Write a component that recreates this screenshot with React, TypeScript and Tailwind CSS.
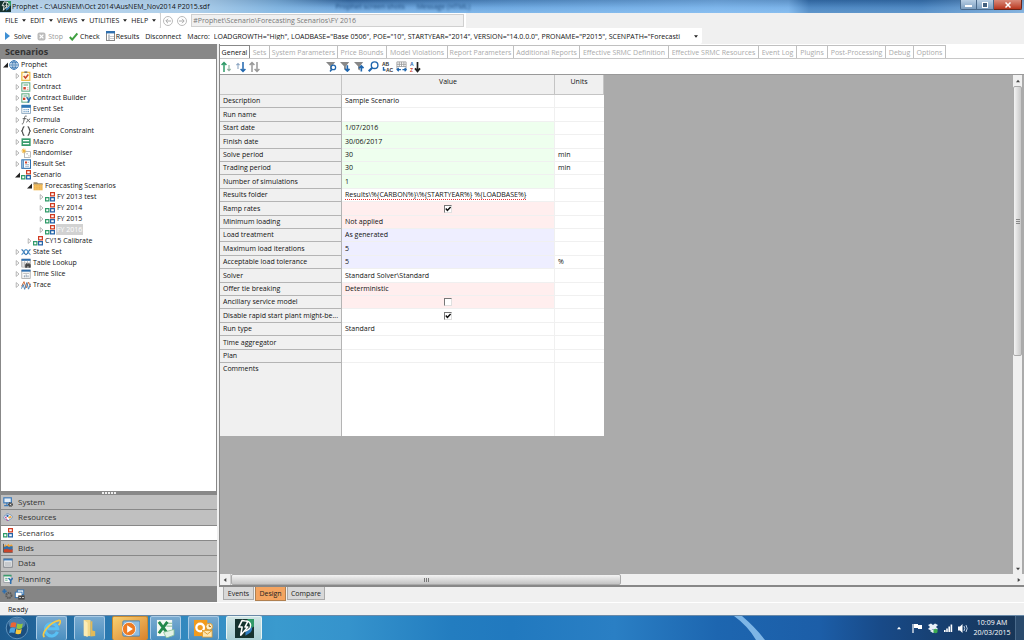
import React from "react";

type Glyph =
  | "globe" | "batch" | "contract" | "builder" | "calendar" | "formula" | "braces" | "macro"
  | "random" | "result" | "scenario" | "folder" | "state" | "lookup" | "slice" | "trace"
  | "system" | "resources" | "bids" | "data" | "planning";

const glyphs: Record<Glyph, React.ReactNode> = {
  globe: (
    <g fill="none" stroke="#2f6fae" strokeWidth="1">
      <circle cx="6" cy="6" r="5.2" fill="#fff" />
      <ellipse cx="6" cy="6" rx="2.4" ry="5.2" />
      <path d="M.8 6h10.4M1.8 3.2h8.4M1.8 8.8h8.4M6 .8v10.4" strokeWidth=".8" />
    </g>
  ),
  batch: (
    <g fill="none">
      <rect x="1" y="1.6" width="9.6" height="9.6" fill="#fff8e0" stroke="#eebb45" strokeWidth="1.5" />
      <path d="M4 1.4h3.6" stroke="#777" strokeWidth="2" />
      <path d="M3.2 6l2.2 2.4 3.4-4.2" stroke="#c8442a" strokeWidth="1.8" />
    </g>
  ),
  contract: (
    <g fill="none">
      <rect x="1" y="1" width="9.6" height="10" fill="#fff" stroke="#57a77e" strokeWidth="1.2" />
      <path d="M3 3.600h5.600" stroke="#57a77e" strokeWidth="1.200" />
      <rect x="2.800" y="6" width="3" height="3" fill="#d2452c" />
      <path d="M7 7h2M7 9h2" stroke="#d9a090" />
    </g>
  ),
  builder: (
    <g fill="none">
      <rect x="1" y="1" width="8.6" height="10" fill="#fff" stroke="#57a77e" strokeWidth="1.2" />
      <path d="M3 3.6h4.6" stroke="#57a77e" strokeWidth="1.200" />
      <rect x="2.4" y="5.6" width="2.8" height="2.8" fill="#d2452c" />
      <path d="M6.8 5l2.3 3.400M11.6 5L8.2 11.6" stroke="#2f6fae" strokeWidth="1.8" />
    </g>
  ),
  calendar: (
    <g>
      <rect x="1" y="1.600" width="10.400" height="9.600" fill="#fff" stroke="#7e9cb8" />
      <path d="M.6 1h11.200v3.600H.6z" fill="#2f78b7" />
      <path d="M3 6.600h1.400M5.400 6.600h1.400M7.800 6.600h1.800M3 9h1.400M5.400 9h1.400M7.800 9h1.800" stroke="#6c9cc6" strokeWidth="1.500" />
    </g>
  ),
  formula: (
    <g fill="none" stroke="#555" strokeWidth="1.1">
      <path d="M1 10.600c1.400.4 1.800-.8 2.200-2.600l1-4.800C4.600 1.400 5.200.8 6.800 1.400M2 4.400h4M6.600 4.600c1.600-.4 2.200 4 4.400 3.800M11 4.400L6.200 8.800" />
    </g>
  ),
  braces: (
    <g fill="none" stroke="#444" strokeWidth="1.4">
      <path d="M4 .8C1.400.8 3 5 .8 6 3 7 1.400 11.200 4 11.200M8 .8c2.600 0 1 4.200 3.200 5.200C9 7 10.600 11.200 8 11.200" />
    </g>
  ),
  macro: (
    <g>
      <rect x=".6" y="1.600" width="11" height="9.200" fill="#3a9c6c" />
      <path d="M2.400 4.400h7.400M2.400 8h7.400" stroke="#fff" strokeWidth="1.400" />
    </g>
  ),
  random: (
    <g>
      <rect x="4" y="4.400" width="7.400" height="6.800" fill="#fff" stroke="#999" strokeWidth=".8" />
      <path d="M6.600 7h1.400M9 9.400h1" stroke="#777" />
      <path d="M3.400.6v5.800M.6 3.500h5.600M1.400 1.500l4 4M5.400 1.500l-4 4" stroke="#f0b030" strokeWidth="1.1" />
    </g>
  ),
  result: (
    <g>
      <rect x="1" y="1" width="10.400" height="10.200" fill="#fff" stroke="#2f6fae" strokeWidth="1.300" />
      <path d="M2.800 1v10" stroke="#5a94c8" strokeWidth="1.600" />
      <rect x="4.800" y="3" width="2.400" height="2.400" fill="#d2452c" />
      <path d="M8 4h1.600M5 6.800h4.600M5 8.800h4.600" stroke="#7fa0c0" strokeWidth=".9" />
    </g>
  ),
  scenario: (
    <g transform="scale(1.2)" fillRule="evenodd">
      <path d="M5 0h5v4.500H5zM6.200 1.200v2.100h2.600V1.200z" fill="#cf3b22" />
      <path d="M0 5h4.500v4.500H0zM1.200 6.200v2.100h2.100V6.200z" fill="#2f9a68" />
      <path d="M5 5h5v4.500H5zM6.200 6.200v2.100h2.600V6.200z" fill="#2463a8" />
    </g>
  ),
  folder: (
    <g>
      <path d="M.6 1.400h4.400l1 1.400h5.600v2H.6z" fill="#9b8b6c" />
      <rect x=".6" y="4" width="11" height="7.200" fill="#f3c062" />
      <path d="M1.400 5.600h9.600M1.400 7.600h9.600M1.400 9.600h9.600" stroke="#e09a35" strokeWidth=".7" strokeDasharray="1 1" />
    </g>
  ),
  state: (
    <g fill="none" strokeWidth="1.500">
      <path d="M.6 3c3 0 2.400 6 5.400 6s2.400-6 5.400-6" stroke="#2f6fae" />
      <path d="M.6 9c3 0 2.400-6 5.400-6s2.400 6 5.400 6" stroke="#4b90c8" />
    </g>
  ),
  lookup: (
    <g>
      <rect x="1" y="1.400" width="10" height="9.400" fill="#fff" stroke="#888" strokeWidth=".8" />
      <path d="M.6 1h10.800v2.400H.6z" fill="#2f6fae" />
      <path d="M1 6h10M1 8.400h10M4.400 3v8M7.800 3v8" stroke="#999" strokeWidth=".7" />
      <path d="M5 7.600h1v-1.400h1.800v1.400h.8v-1.400h1.800v1.400h1.200v4H8.800v-2h-1v2H5z" fill="#444" />
    </g>
  ),
  slice: (
    <g>
      <rect x="1" y="1.400" width="10" height="9.800" fill="#fff" stroke="#999" strokeWidth=".9" />
      <path d="M.6 .8h10.800v2.400H.6z" fill="#2f6fae" />
      <path d="M2.600 5.200h7" stroke="#aaa" />
      <path d="M4 10V7.600M6.200 10V6.600M8.400 10V7.600" stroke="#7d8ea0" strokeWidth="1.100" />
    </g>
  ),
  trace: (
    <g fill="none" strokeWidth="1.200">
      <path d="M.6 7.600L3.600 2l2.600 7.600L9 2.400l2.600 6" stroke="#d2703c" />
      <path d="M.6 10.400l2-5 1.800 5.800L7 3l2 8 2.600-6.600" stroke="#5486b5" />
    </g>
  ),
  system: (
    <g>
      <rect x="1" y="1" width="9" height="6" fill="#e4eef8" stroke="#3d7ab8" strokeWidth="1.400" />
      <path d="M4.600 7v2.400M1.400 10.400h5.400" stroke="#3d7ab8" strokeWidth="1.600" />
      <circle cx="9" cy="9" r="2" fill="#ddd" stroke="#333" strokeWidth="1.600" strokeDasharray="1.200 .5" />
      <circle cx="9" cy="9" r="1.300" fill="#ddd" stroke="#333" strokeWidth=".9" />
    </g>
  ),
  resources: (
    <g fill="#fff">
      <path d="M3 8.600C.4 8.600.2 5 2.600 4.600 3 2 7 1.400 8 3.600c3-.6 4.200 3.400 1.400 4.600L6 10.600z" stroke="#5c86b8" strokeWidth="1" />
      <path d="M2.400 6l2 1.400M4 8.800l2 1.600" stroke="#c04f90" strokeWidth="1.400" />
      <path d="M6 6.200L9 4.400l1.600 2L7.400 8.200z" fill="#f0a840" />
      <circle cx="5.400" cy="4.600" r="1.400" fill="#2463a8" />
    </g>
  ),
  bids: (
    <g>
      <path d="M.6 1v10.200h11" fill="none" stroke="#444" />
      <path d="M1.200 3.800L3 1.600l1.600 1.600L6.400 1l1.800 2L10 1.400l1.600 1.800v3H1.200z" fill="#f0a030" />
      <path d="M1.200 4.400h2v-.8h2.600v1h2.800v-.8h3v5H1.200z" fill="#2f6fae" />
      <path d="M1.200 7.600l4-.8 3 1.200 3.400-.6v3.800H1.200z" fill="#c8442a" />
    </g>
  ),
  data: (
    <g>
      <rect x="1" y="1" width="10" height="10" fill="#fff" stroke="#6a7078" />
      <path d="M.6 .8h10.800v2.200H.6z" fill="#3d7ab8" />
      <path d="M3.600 4.200v5.800M6 4.200v5.800M8.400 4.200v5.800" stroke="#7a8088" strokeWidth="1" />
    </g>
  ),
  planning: (
    <g>
      <rect x="1" y="1.400" width="8.600" height="8.600" fill="#fff" stroke="#8a9098" strokeWidth=".9" />
      <path d="M.6 1h9.600v2H.6z" fill="#3a9c6c" />
      <path d="M2.600 5.200h3M2.600 7.400h3" stroke="#3a9c6c" />
      <path d="M6.600 4.800l2.600 3 2.600-3M9.200 7.200V12" fill="none" stroke="#2f6fae" strokeWidth="1.800" />
    </g>
  ),
};

function Icon({ name }: { name: Glyph }) {
  return (
    <svg viewBox="0 0 12 12" className="size-[10px] shrink-0" aria-hidden="true">
      {glyphs[name]}
    </svg>
  );
}

const tree: { label: string; icon: Glyph; level: 0 | 1 | 2 | 3; open?: boolean; selected?: boolean }[] = [
  { label: "Prophet", icon: "globe", level: 0, open: true },
  { label: "Batch", icon: "batch", level: 1 },
  { label: "Contract", icon: "contract", level: 1 },
  { label: "Contract Builder", icon: "builder", level: 1 },
  { label: "Event Set", icon: "calendar", level: 1 },
  { label: "Formula", icon: "formula", level: 1 },
  { label: "Generic Constraint", icon: "braces", level: 1 },
  { label: "Macro", icon: "macro", level: 1 },
  { label: "Randomiser", icon: "random", level: 1 },
  { label: "Result Set", icon: "result", level: 1 },
  { label: "Scenario", icon: "scenario", level: 1, open: true },
  { label: "Forecasting Scenarios", icon: "folder", level: 2, open: true },
  { label: "FY 2013 test", icon: "scenario", level: 3 },
  { label: "FY 2014", icon: "scenario", level: 3 },
  { label: "FY 2015", icon: "scenario", level: 3 },
  { label: "FY 2016", icon: "scenario", level: 3, selected: true },
  { label: "CY15 Calibrate", icon: "scenario", level: 2 },
  { label: "State Set", icon: "state", level: 1 },
  { label: "Table Lookup", icon: "lookup", level: 1 },
  { label: "Time Slice", icon: "slice", level: 1 },
  { label: "Trace", icon: "trace", level: 1 },
];

const indent = ["pl-[2px]", "pl-[14px]", "pl-[26px]", "pl-[38px]"];

function TreePane() {
  return (
    <ul className="min-h-0 flex-1 overflow-hidden border-x border-[#888] bg-white">
      {tree.map((n) => (
        <li key={n.label}>
          <button className={`flex h-[11px] items-center leading-[11px] ${indent[n.level]}`}>
            <svg viewBox="0 0 5 6" className="mr-px h-[6px] w-[5px]" aria-hidden="true">
              {n.open ? <path d="M5 .5v5H0z" fill="#222" /> : <path d="M1.200.6v4.800L4 3z" fill="#fff" stroke="#999" strokeWidth=".7" />}
            </svg>
            <Icon name={n.icon} />
            <span className={n.selected ? "ml-px bg-[#d2d2d2] px-px text-white" : "ml-px px-px"}>{n.label}</span>
          </button>
        </li>
      ))}
    </ul>
  );
}

const sections: { label: string; icon: Glyph; active?: boolean }[] = [
  { label: "System", icon: "system" },
  { label: "Resources", icon: "resources" },
  { label: "Scenarios", icon: "scenario", active: true },
  { label: "Bids", icon: "bids" },
  { label: "Data", icon: "data" },
  { label: "Planning", icon: "planning" },
];

function Sidebar() {
  return (
    <aside className="flex w-[217px] shrink-0 flex-col">
      <h2 className="flex h-[15px] items-center bg-[#888] pl-[5px] text-[9px] font-bold text-[#333]">Scenarios</h2>
      <TreePane />
      <div className="flex h-1 items-center justify-center gap-px bg-[#888]">
        {[0, 1, 2, 3, 4].map((d) => (
          <span key={d} className="size-[2px] bg-[#eee]" />
        ))}
      </div>
      <nav className="grid h-[92px] auto-rows-fr">
        {sections.map((s) => (
          <button
            key={s.label}
            className={`flex items-center gap-[5px] border-b border-l border-[#888] pl-[2px] text-[8px] leading-none text-[#333] ${s.active ? "bg-white" : "bg-[#c0c0c0]"}`}
          >
            <Icon name={s.icon} />
            {s.label}
          </button>
        ))}
      </nav>
      <div className="flex h-[15px] items-center gap-px bg-[#858585] pl-[2px]">
        <svg viewBox="0 0 12 12" className="size-[11px]" aria-hidden="true">
          <circle cx="7.500" cy="7" r="2.800" fill="none" stroke="#5a5a5a" strokeWidth="2.200" strokeDasharray="1.600 .7" />
          <path d="M2.600 0v5M.4 2.600h4.600" stroke="#2f6fae" strokeWidth="1.800" />
        </svg>
        <svg viewBox="0 0 12 12" className="size-[11px]" aria-hidden="true">
          <rect x="3.600" y="1" width="7" height="5" fill="#fff" stroke="#2f6fae" />
          <rect x="1.400" y="3.400" width="7.400" height="6" fill="#fff" stroke="#2f6fae" />
          <path d="M4.600 7h7v4.600h-7z" fill="#444" />
          <path d="M5.600 9.200h2M8.800 9.200h2" stroke="#ccc" strokeWidth="1.200" />
        </svg>
      </div>
    </aside>
  );
}

const tabs = [
  { label: "General", w: "w-[30px]" },
  { label: "Sets", w: "w-[20px]" },
  { label: "System Parameters", w: "w-[68px]" },
  { label: "Price Bounds", w: "w-[49px]" },
  { label: "Model Violations", w: "w-[61px]" },
  { label: "Report Parameters", w: "w-[66px]" },
  { label: "Additional Reports", w: "w-[66px]" },
  { label: "Effective SRMC Definition", w: "w-[89px]" },
  { label: "Effective SRMC Resources", w: "w-[90px]" },
  { label: "Event Log", w: "w-[38px]" },
  { label: "Plugins", w: "w-[31px]" },
  { label: "Post-Processing", w: "w-[58px]" },
  { label: "Debug", w: "w-[28px]" },
  { label: "Options", w: "w-[32px]" },
];

const green = "bg-[#eeffee]";
const red = "bg-[#ffeeee]";
const blue = "bg-[#eeeeff]";

const rows: { label: string; value?: string; units?: string; fill?: string; checked?: boolean; spell?: boolean }[] = [
  { label: "Description", value: "Sample Scenario" },
  { label: "Run name" },
  { label: "Start date", value: "1/07/2016", fill: green },
  { label: "Finish date", value: "30/06/2017", fill: green },
  { label: "Solve period", value: "30", units: "min", fill: green },
  { label: "Trading period", value: "30", units: "min", fill: green },
  { label: "Number of simulations", value: "1", fill: green },
  { label: "Results folder", value: "Results\\%{CARBON%}\\%{STARTYEAR%} %{LOADBASE%}", spell: true },
  { label: "Ramp rates", checked: true, fill: red },
  { label: "Minimum loading", value: "Not applied", fill: red },
  { label: "Load treatment", value: "As generated", fill: blue },
  { label: "Maximum load iterations", value: "5", fill: blue },
  { label: "Acceptable load tolerance", value: "5", units: "%", fill: blue },
  { label: "Solver", value: "Standard Solver\\Standard" },
  { label: "Offer tie breaking", value: "Deterministic", fill: red },
  { label: "Ancillary service model", checked: false, fill: red },
  { label: "Disable rapid start plant might-be...", checked: true },
  { label: "Run type", value: "Standard" },
  { label: "Time aggregator" },
  { label: "Plan" },
];

function Check({ label, checked }: { label: string; checked: boolean }) {
  return (
    <span className="grid place-content-center">
      <input
        type="checkbox"
        aria-label={label}
        defaultChecked={checked}
        className="peer col-start-1 row-start-1 size-[8px] appearance-none border border-[#e0e0e0] border-t-[#777] border-l-[#777] bg-white"
      />
      <svg viewBox="0 0 8 8" className="pointer-events-none invisible col-start-1 row-start-1 size-[8px] peer-checked:visible" aria-hidden="true">
        <path d="M1.800 3.600l1.600 1.800L6.600 2" fill="none" stroke="#111" strokeWidth="1.500" />
      </svg>
    </span>
  );
}

function PropertyTable() {
  const head = "border-r border-b border-[#c4c4c4] bg-[#f0f0f0] p-0 align-top font-normal leading-[13px]";
  return (
    <table className="w-[384px] table-fixed border-separate border-spacing-0 bg-white leading-[12px]">
      <colgroup>
        <col className="w-[122px]" />
        <col className="w-[213px]" />
        <col className="w-[49px]" />
      </colgroup>
      <thead>
        <tr className="h-5">
          <th className={head} aria-label="Property" />
          <th className={head}>Value</th>
          <th className={head}>Units</th>
        </tr>
      </thead>
      <tbody>
        {rows.map((r) => (
          <tr key={r.label} className="h-[13px] nth-[5n+2]:h-[14px] nth-[5n+4]:h-[14px]">
            <th scope="row" className="truncate border-r border-b border-[#b4b4b4] bg-[#f0f0f0] py-0 pr-0 pl-[3px] text-left font-normal">
              {r.label}
            </th>
            <td className={`border-r border-b border-[#f0f0f0] px-[3px] py-0 whitespace-nowrap ${r.fill ?? ""}`}>
              {r.checked !== undefined ? (
                <Check label={r.label} checked={r.checked} />
              ) : (
                <span className={r.spell ? "border-b border-dotted border-[#f03030]" : ""}>{r.value}</span>
              )}
            </td>
            <td className="border-b border-[#f0f0f0] py-0 pr-0 pl-[3px]">{r.units}</td>
          </tr>
        ))}
        <tr className="h-[73px]">
          <th scope="row" className="border-r border-[#b4b4b4] bg-[#f0f0f0] py-0 pr-0 pl-[3px] text-left align-top font-normal">Comments</th>
          <td className="border-r border-[#f0f0f0]" />
          <td />
        </tr>
      </tbody>
    </table>
  );
}

function SortIcon({ up, down, strong }: { up: string; down: string; strong: "up" | "down" | "both" }) {
  return (
    <svg viewBox="0 0 11 12" className="h-[12px] w-[11px]" fill="none" aria-hidden="true">
      {strong === "down" ? (
        <path d="M3 8V2.500M1.400 4.200L3 2.500 4.600 4.200" stroke={up} strokeWidth="1.100" />
      ) : (
        <path d="M3 11V1.500M.6 4L3 1.500 5.400 4" stroke={up} strokeWidth="1.500" />
      )}
      {strong === "up" ? (
        <path d="M8 4v5.500M6.400 8L8 9.700 9.600 8" stroke={down} strokeWidth="1.100" />
      ) : (
        <path d="M8 1v9.500M5.600 8L8 10.500 10.400 8" stroke={down} strokeWidth="1.500" />
      )}
    </svg>
  );
}

function FilterIcon({ children }: { children: React.ReactNode }) {
  return (
    <svg viewBox="0 0 12 12" className="size-[11px]" fill="none" aria-hidden="true">
      <path d="M0 1h10L6.400 5.600v4.800l-2-1.400V5.600z" fill="#888" />
      {children}
    </svg>
  );
}

function GridToolbar() {
  return (
    <div className="flex h-[15px] items-center pl-px">
      <div className="flex w-[105px] gap-[3px]">
        <button aria-label="Sort ascending"><SortIcon strong="up" up="#2f9a68" down="#8fb0a0" /></button>
        <button aria-label="Sort descending"><SortIcon strong="down" up="#8fa8c4" down="#1f66ae" /></button>
        <button aria-label="Clear sort"><SortIcon strong="both" up="#999" down="#999" /></button>
      </div>
      <div className="flex gap-[3px]">
        <button aria-label="Filter search">
          <FilterIcon>
            <circle cx="8" cy="7" r="2.500" fill="#fff" stroke="#1f66ae" strokeWidth="1.400" />
            <path d="M6.400 9l-2 2.400" stroke="#1f66ae" strokeWidth="1.600" />
          </FilterIcon>
        </button>
        <button aria-label="Filter down">
          <FilterIcon><path d="M8 4.500v6.500M5.600 8.600L8 11l2.400-2.400" stroke="#1f66ae" strokeWidth="1.800" /></FilterIcon>
        </button>
        <button aria-label="Filter up">
          <FilterIcon><path d="M8 11.500V5.400M5.600 7.800L8 5.400l2.400 2.400" stroke="#1f66ae" strokeWidth="1.800" /></FilterIcon>
        </button>
        <button aria-label="Find">
          <svg viewBox="0 0 12 12" className="size-[11px]" fill="none" aria-hidden="true">
            <circle cx="7.200" cy="4.600" r="3.600" stroke="#1f66ae" strokeWidth="1.500" />
            <path d="M4.600 7.400L.8 11.200" stroke="#1f66ae" strokeWidth="2.200" />
          </svg>
        </button>
        <button aria-label="Replace">
          <svg viewBox="0 0 11 12" className="h-[12px] w-[11px] overflow-visible font-['Liberation_Sans',sans-serif]" aria-hidden="true">
            <text x="0" y="5" fontSize="5" fontWeight="bold" fill="#333">AB</text>
            <text x="4" y="11" fontSize="5" fontWeight="bold" fill="#333">AC</text>
            <path d="M1.500 6v3h2" fill="none" stroke="#1f66ae" strokeWidth="1.400" />
          </svg>
        </button>
        <button aria-label="Fit columns">
          <svg viewBox="0 0 12 12" className="size-[11px]" fill="none" aria-hidden="true">
            <path d="M1 1h10v8M1 1v8M1 3.600h10M1 6h10M3.600 1v5M6 1v5M8.600 1v5" stroke="#999" strokeWidth=".9" />
            <path d="M1 9.400h4.400M7 9.400h4.400M3 7.600L1.200 9.400 3 11.200M9.400 7.600l1.800 1.800-1.800 1.800" stroke="#1f66ae" strokeWidth="1.300" />
          </svg>
        </button>
        <button aria-label="Sort A to Z">
          <svg viewBox="0 0 11 12" className="h-[12px] w-[11px] overflow-visible font-['Liberation_Sans',sans-serif]" aria-hidden="true">
            <text x="0" y="5" fontSize="5" fontWeight="bold" fill="#1f66ae">A</text>
            <text x="0" y="11" fontSize="5" fontWeight="bold" fill="#d2452c">Z</text>
            <path d="M7.500 1v9M5 7.400l2.500 3 2.500-3" fill="none" stroke="#222" strokeWidth="1.700" />
          </svg>
        </button>
      </div>
    </div>
  );
}

function TitleBar() {
  return (
    <header className="flex h-[13px] shrink-0 items-center bg-[linear-gradient(90deg,#c4dbeee0_0%,#b4d2eae0_19%,#8fbfe4a0_27%,#4f94d400_34%,#7ab8f060_50%,#8cc4f890_70%,#8cc4f880_77%,#2f6aa870_79%,#2f6aa870_90%,#8ab4dca0_100%),linear-gradient(180deg,#2f5f94,#6ba3da_60%,#86b8e6)] text-[#111]">
      <ProphetMark className="size-[11px]" />
      <h1 className="-mt-px ml-px whitespace-nowrap">Prophet - C:\AUSNEM\Oct 2014\AusNEM_Nov2014 P2015.sdf</h1>
      <div aria-hidden="true" className="ml-[126px] flex flex-1 gap-3 whitespace-nowrap text-[#1d4a7c] blur-[1px]">
        <span>Prophet screen shots</span>
        <span>Message (HTML)</span>
      </div>
      <div className="flex h-full items-start pr-[2px]">
        <button aria-label="Minimise" className="grid h-[10px] w-[17px] place-items-center rounded-bl-xs border border-t-0 border-[#49698a] bg-linear-to-b from-[#b9cfe4] to-[#7d9fc0]">
          <span className="mt-[2px] h-[2px] w-[7px] bg-white" />
        </button>
        <button aria-label="Restore" className="grid h-[10px] w-[17px] place-items-center border-r border-b border-[#49698a] bg-linear-to-b from-[#b9cfe4] to-[#7d9fc0]">
          <span className="size-[6px] border border-white bg-[#44617f]" />
        </button>
        <button aria-label="Close" className="grid h-[10px] w-[28px] place-items-center rounded-br-xs border-r border-b border-[#6a2418] bg-linear-to-b from-[#d98a7a] to-[#b8341c]">
          <svg viewBox="0 0 6 6" className="size-[6px]" aria-hidden="true"><path d="M.5.5l5 5M5.500.5l-5 5" stroke="#fff" strokeWidth="1.500" /></svg>
        </button>
      </div>
    </header>
  );
}

const prophetShape = (
  <>
    <rect width="20" height="20" fill="#16332f" />
    <path d="M13 0h7v8l-3 2z" fill="#2f9a68" />
    <path d="M11 17.500l5-3q3-3 1.500-6.500l-1.500 2-5 4z" fill="#2f7cc0" />
    <path d="M7.500 1.500L4 8.500h3.500L6 17l7.500-8.500h-3L13.500 2.500z" fill="#16332f" stroke="#fff" strokeWidth="1.600" strokeLinejoin="round" />
    <path d="M12 2q6 1.500 4 7-1.500 3-6 4" fill="none" stroke="#fff" strokeWidth="1.500" />
  </>
);

function ProphetMark({ className }: { className: string }) {
  return <svg viewBox="0 0 20 20" className={className} aria-hidden="true">{prophetShape}</svg>;
}

const Caret = () => (
  <svg viewBox="0 0 5 3" className="h-[3px] w-[4px]" aria-hidden="true"><path d="M0 0h5L2.500 3z" fill="#222" /></svg>
);

function MenuBar() {
  const round = "grid size-[10px] place-items-center rounded-full border border-[#bbb]";
  return (
    <div className="flex h-[15px] shrink-0 items-stretch bg-[#f0f0f0]">
      <div className="flex items-center gap-1 rounded-r-xs bg-white pr-1 pl-[5px]">
        {["FILE", "EDIT", "VIEWS", "UTILITIES", "HELP"].map((m) => (
          <button key={m} className="flex items-center gap-1">{m}<Caret /></button>
        ))}
      </div>
      <div className="flex w-[306px] items-center gap-1 border-l border-[#d0d0d0] bg-white pl-[2px]">
        <button aria-label="Back" className={round}>
          <svg viewBox="0 0 6 6" className="size-[6px]" aria-hidden="true"><path d="M6 3H1M3 .8L.8 3 3 5.200" fill="none" stroke="#aaa" /></svg>
        </button>
        <button aria-label="Forward" className={round}>
          <svg viewBox="0 0 6 6" className="size-[6px]" aria-hidden="true"><path d="M0 3h5M3 .8L5.200 3 3 5.200" fill="none" stroke="#aaa" /></svg>
        </button>
        <input
          aria-label="Location"
          readOnly
          defaultValue="#Prophet\Scenario\Forecasting Scenarios\FY 2016"
          className="mr-[2px] h-[13px] min-w-0 flex-1 border border-[#d0d0d0] bg-[#f0f0f0] px-px text-[#777] outline-none"
        />
      </div>
    </div>
  );
}

function CommandBar() {
  return (
    <div className="flex h-4 shrink-0 bg-[#f0f0f0]">
      <div className="flex w-[702px] items-center gap-[6px] rounded-br-xs bg-white pl-[5px]">
        <button className="flex items-center gap-1">
          <svg viewBox="0 0 5 8" className="h-[8px] w-[5px]" aria-hidden="true"><path d="M0 0l5 4-5 4z" fill="#3d8fd4" /></svg>
          Solve
        </button>
        <button className="flex items-center gap-[2px] text-[#999]">
          <svg viewBox="0 0 9 9" className="size-[9px]" aria-hidden="true">
            <rect x=".5" y=".5" width="8" height="8" rx="2" fill="#bbb" />
            <path d="M2.600 2.600l3.800 3.800M6.400 2.600L2.600 6.400" stroke="#fff" strokeWidth="1.300" />
          </svg>
          Stop
        </button>
        <button className="flex items-center gap-[2px]">
          <svg viewBox="0 0 9 9" className="size-[9px]" aria-hidden="true"><path d="M.8 5l2.400 2.600L8.400 1.400" fill="none" stroke="#3fa040" strokeWidth="2" /></svg>
          Check
        </button>
        <button className="flex items-center gap-px">
          <svg viewBox="0 0 9 10" className="h-[10px] w-[9px]" aria-hidden="true">
            <rect x=".5" y=".5" width="8" height="9" fill="#fff" stroke="#888" />
            <path d="M0 0h9v2.400H0z" fill="#2f6fae" />
            <path d="M3 3.500v5.500M5 5v1M5 7v1M7 5v1M7 7v1" stroke="#8a9098" />
          </svg>
          Results
        </button>
        <button>Disconnect</button>
        <div className="flex min-w-0 flex-1 items-center gap-[4px]">
          <label htmlFor="macro">Macro:</label>
          <select id="macro" className="w-[476px] appearance-none bg-transparent outline-none">
            <option>{'LOADGROWTH="High", LOADBASE="Base 0506", POE="10", STARTYEAR="2014", VERSION="14.0.0.0", PRONAME="P2015", SCENPATH="Forecasti'}</option>
          </select>
          <Caret />
        </div>
      </div>
    </div>
  );
}

function Arrow({ d, light }: { d: string; light?: boolean }) {
  return <svg viewBox="0 0 6 6" className={`size-[4px] ${light ? "fill-white" : "fill-[#444]"}`} aria-hidden="true"><path d={d} /></svg>;
}

function Workspace() {
  return (
    <main className="ml-[2px] flex min-w-0 flex-1 flex-col bg-[#f0f0f0]">
      <div className="flex min-h-0 flex-1 flex-col border-b-2 border-l border-[#888] bg-white">
        <div role="tablist" className="flex h-[15px] items-end border-b border-[#c8c8c8] whitespace-nowrap">
          {tabs.map((t, i) => (
            <button
              key={t.label}
              role="tab"
              aria-selected={i === 0}
              className={`flex h-[13px] shrink-0 items-center justify-center border-t border-r ${t.w} ${i === 0 ? "border-[#888] bg-white" : "border-[#c0c0c0] text-[#aaa]"}`}
            >
              {t.label}
            </button>
          ))}
        </div>
        <GridToolbar />
        <div className="flex min-h-0 flex-1 border-t border-[#999] bg-[#ababab]">
          <div className="min-h-0 min-w-0 flex-1 overflow-hidden">
            <PropertyTable />
          </div>
          <div className="mr-[2px] flex w-[9px] flex-col bg-[#f0f0f0]">
            <button aria-label="Scroll up" className="grid h-[11px] place-items-center"><Arrow d="M0 5h6L3 1z" /></button>
            <div className="grid h-[270px] place-items-center rounded-xs border border-[#aaa] bg-linear-to-r from-[#f4f4f4] to-[#c8c8c8]">
              <span className="h-[5px] w-[4px] bg-[repeating-linear-gradient(#888_0_1px,transparent_1px_2px)]" />
            </div>
            <button aria-label="Scroll down" className="mt-auto grid h-[11px] place-items-center"><Arrow d="M0 1h6L3 5z" /></button>
          </div>
        </div>
        <div className="flex h-[11px] shrink-0 bg-[#f0f0f0]">
          <button aria-label="Scroll left" className="grid w-[11px] place-items-center border-r border-[#ccc]"><Arrow d="M5 0v6L1 3z" /></button>
          <div className="grid w-[390px] place-items-center rounded-xs border border-[#aaa] bg-linear-to-b from-[#f4f4f4] to-[#c4c4c4]">
            <span className="h-[4px] w-[5px] bg-[repeating-linear-gradient(90deg,#777_0_1px,transparent_1px_2px)]" />
          </div>
          <button aria-label="Scroll right" className="ml-auto grid w-[11px] place-items-center"><Arrow d="M1 0v6l4-3z" /></button>
        </div>
      </div>
      <div className="flex h-[15px] shrink-0 gap-px pl-1 text-[#222]">
        <button className="h-[13px] w-[31px] border border-t-0 border-[#aaa] bg-[#d8d8d8]">Events</button>
        <button className="h-[14px] w-[31px] border border-t-0 border-[#b08050] bg-[#f4a460]">Design</button>
        <button className="h-[13px] w-[38px] border border-t-0 border-[#aaa] bg-[#d8d8d8]">Compare</button>
      </div>
    </main>
  );
}

function TaskButton({ label, tone, children }: { label: string; tone: string; children: React.ReactNode }) {
  return (
    <button aria-label={label} className={`grid h-full place-items-center rounded-xs border border-b-0 ${tone}`}>
      <svg viewBox="0 0 20 20" className="size-[19px]" aria-hidden="true">{children}</svg>
    </button>
  );
}

function Taskbar() {
  const glass = "w-[31px] border-[#a9cbe6] bg-linear-to-b from-[#78aad0] to-[#4a8fc0]";
  return (
    <footer className="flex h-[25px] shrink-0 items-stretch border-t border-[#6a8aa8] bg-[linear-gradient(90deg,#1c5a8e_0%,#2c7db5_12%,#3a9ace_27%,#3593cc_34%,#237dc0_44%,#2179bf_50%,#2a7fc4_60%,#1d66b0_70%,#1c5ea8_80%,#184a88_86%,#173f70_92%,#183555_100%)]">
      <div className="flex gap-[7px] pl-[5px]">
        <button aria-label="Start" className="grid w-[24px] place-items-center">
          <svg viewBox="0 0 24 24" className="size-[24px]" aria-hidden="true">
            <circle cx="12" cy="12" r="10.800" fill="#1b4f80" stroke="#5f93bd" />
            <ellipse cx="12" cy="7.500" rx="8.500" ry="5.500" fill="#5e93bd" opacity=".7" />
            <path d="M6 7q2.800-1.600 5.400 0l-.9 4.600q-2.600-1.400-5.300 0z" fill="#ea6436" />
            <path d="M12.300 7.600q2.800 1.500 5.500 0l-.9 4.600q-2.700 1.400-5.400 0z" fill="#93c73e" />
            <path d="M5 12.500q2.700-1.400 5.300 0l-.9 4.600q-2.600-1.400-5.300 0z" fill="#4aa3e0" />
            <path d="M11.300 13q2.700 1.400 5.400 0l-.9 4.600q-2.700 1.400-5.400 0z" fill="#fac73b" />
          </svg>
        </button>
        <TaskButton label="Internet Explorer" tone={glass}>
          <path d="M16.200 13.500A6.500 6.500 0 1 1 16.500 10.300H5.500" fill="none" stroke="#58c0f4" strokeWidth="3.200" />
          <path d="M2.500 19C-1 16 7 4 18 1.500c2.500 0 1 3-.5 5" fill="none" stroke="#f6c945" strokeWidth="1.800" />
        </TaskButton>
        <TaskButton label="Explorer" tone={glass}>
          <path d="M4 1h7v17H4z" fill="#f3d98a" />
          <path d="M11 3l2-1v10l3 1v5l-5 .5z" fill="#e2ba58" />
          <path d="M4 1l4 3v15l-4-2z" fill="#fbecb5" />
        </TaskButton>
        <div className="flex gap-[2px]">
          <TaskButton label="Media Player" tone="w-[36px] border-[#c98b30] bg-linear-to-br from-[#f7d070] to-[#d9822a]">
            <rect x="2" y="2" width="18" height="16" rx="1" fill="#8fbde0" stroke="#4a7fae" />
            <circle cx="8.500" cy="10.500" r="7" fill="#ee7b22" stroke="#fff" strokeWidth=".8" />
            <path d="M6.500 6.500v8l6-4z" fill="#fff" />
          </TaskButton>
          <TaskButton label="Excel" tone={glass}>
            <rect x="1" y="1" width="16" height="17" fill="#f3f8f3" />
            <path d="M11 4.500h6M11 7.500h6" stroke="#7cba8c" />
            <path d="M3 3l9 12M12 3L3 15" stroke="#23884a" strokeWidth="3" />
            <path d="M8 14l11-3v6l-8 3z" fill="#e2f2e4" stroke="#7cba8c" strokeWidth=".8" />
          </TaskButton>
        </div>
        <TaskButton label="Outlook" tone={glass}>
          <rect x="0" y="1" width="14" height="17" fill="#f29b1d" />
          <circle cx="6.500" cy="9" r="4" fill="none" stroke="#fff" strokeWidth="2.400" />
          <rect x="9" y="12" width="10" height="7" fill="#fce6b2" stroke="#e09a2a" strokeWidth=".8" />
          <path d="M9 12l5 4 5-4" fill="none" stroke="#e09a2a" />
          <circle cx="16" cy="8" r="3.500" fill="#fff2cf" stroke="#e09a2a" />
          <path d="M16 5.800V8h2" fill="none" stroke="#a56a10" />
        </TaskButton>
        <TaskButton label="Prophet" tone="w-[36px] border-[#e8f4f4] bg-linear-to-b from-[#cfe4e4] to-[#a9cfd4]">
          {prophetShape}
        </TaskButton>
      </div>
      <svg viewBox="0 0 100 24" preserveAspectRatio="none" className="ml-auto h-full w-[100px]" aria-hidden="true">
        <path d="M12 0h8q14 12 23 24h-9Q26 10 12 0z" fill="#8fc4f0" opacity=".85" />
      </svg>
      <div className="ml-[75px] flex items-center gap-1 text-white">
        <Arrow light d="M0 5h6L3 1z" />
        <svg viewBox="0 0 60 12" className="ml-1 h-[12px] w-[60px]" aria-hidden="true">
          <path d="M4 2v9" stroke="#fff" strokeWidth="1.200" />
          <path d="M5 2h4v1h4v4H9V6H5z" fill="#fff" />
          <path d="M19 3l3-1.500L24 3l2-1.500L29 3l-2 2 2 2-3 1.500-2-1.500-2 1.500L19 7l2-2zM21 9l3-1.500L27 9l-3 2z" fill="#e8f0f8" />
          <circle cx="26.500" cy="9" r="2.200" fill="#3cab50" />
          <path d="M35 10h1.600v-2H35zM37.200 10h1.600V6.400h-1.600zM39.400 10H41V4.600h-1.600zM41.600 10h1.600V2.600h-1.600z" fill="#fff" />
          <path d="M49 4.500h2l2.500-2.500v9L51 8.500h-2z" fill="#fff" />
          <path d="M55 4q1.500 2.500 0 5M57 3q2.400 3.500 0 7" fill="none" stroke="#cfe0f0" strokeWidth=".9" />
        </svg>
        <div className="w-[38px] text-center leading-[10px]">
          <p>10:09 AM</p>
          <p>20/03/2015</p>
        </div>
      </div>
      <button aria-label="Show desktop" className="ml-1 w-[9px] border-l border-[#4a6a8a] bg-[#2a4a6c]" />
    </footer>
  );
}

export default function App() {
  return (
    <div className="flex h-screen flex-col overflow-hidden bg-[#f0f0f0] font-['Open_Sans','Noto_Sans',sans-serif] text-[7px] leading-none text-[#111]">
      <TitleBar />
      <MenuBar />
      <CommandBar />
      <div className="flex min-h-0 flex-1">
        <Sidebar />
        <Workspace />
      </div>
      <div role="status" className="flex h-[13px] shrink-0 items-center border-t border-white pl-2">Ready</div>
      <Taskbar />
    </div>
  );
}
